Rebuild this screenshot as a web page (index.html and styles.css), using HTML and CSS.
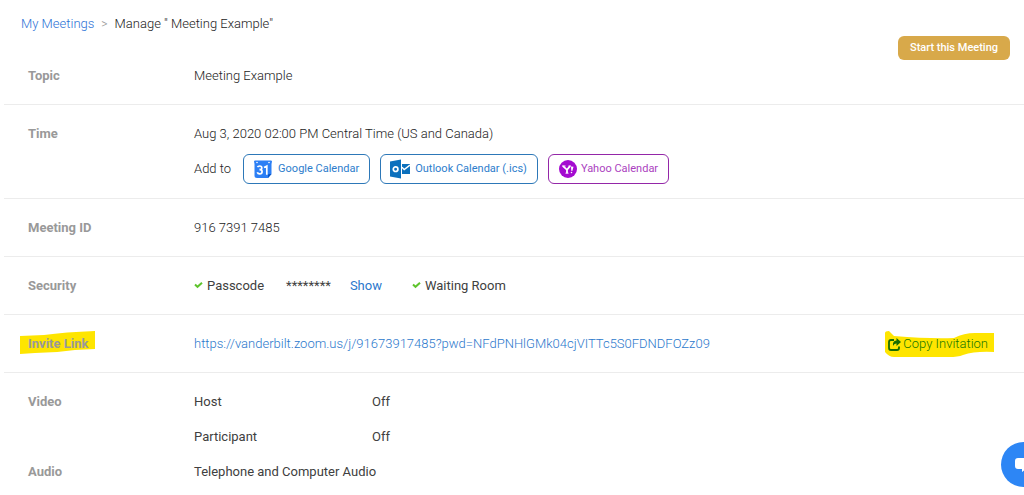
FILE: index.html
```html
<!DOCTYPE html>
<html lang="en">
<head>
<meta charset="utf-8">
<meta name="viewport" content="width=device-width, initial-scale=1">
<title>Manage Meeting</title>
<link rel="stylesheet" href="styles.css">
</head>
<body>
<main class="page">
  <header class="top">
    <nav class="crumbs" aria-label="Breadcrumb"><a href="#">My Meetings</a><span class="sep">&gt;</span><span>Manage " Meeting Example"</span></nav>
    <button class="start" type="button">Start this Meeting</button>
  </header>
  <dl class="details">
    <div class="row">
      <dt>Topic</dt>
      <dd class="light">Meeting Example</dd>
    </div>
    <div class="row time">
      <dt>Time</dt>
      <dd class="light">
        <div>Aug 3, 2020 02:00 PM Central Time (US and Canada)</div>
        <div class="calendars">
          <span class="add">Add to</span>
          <button class="cal" type="button">
            <svg width="20" height="20" viewBox="0 0 20 20" aria-hidden="true"><path fill="#2c7ff5" d="M1 2.500Q1 1 3 1.500h14q2-.5 2 1L18.500 5v10l-3.500 4H4q-2.500 0-2.500-2V5z"/><path fill="#0b56c4" d="M18.500 15L15 19v-3q0-1 1-1z"/><circle cx="4" cy="3.500" r=".8" fill="#fff"/><circle cx="16" cy="3.500" r=".8" fill="#fff"/><path fill="none" stroke="#fff" stroke-width="1.700" d="M4.500 8.200Q5 7 6.700 7q2.100 0 2.100 1.900T6.500 10.700q2.600 0 2.600 2T6.700 14.900Q4.800 14.900 4.300 13.200M11 8.500L13.800 7.200v8.500"/></svg>
            Google Calendar
          </button>
          <button class="cal" type="button">
            <svg width="20" height="20" viewBox="0 0 20 20" aria-hidden="true"><path fill="#0b70bd" d="M0 2.500L11 .5v19L0 17.500zM12 5h8v10h-8z"/><circle cx="5.600" cy="10.200" r="2.300" fill="none" stroke="#fff" stroke-width="1.700"/><path fill="none" stroke="#fff" stroke-width="1.400" d="M12 8.300l2.200 2.200L20 6"/></svg>
            Outlook Calendar (.ics)
          </button>
          <button class="cal yahoo" type="button">
            <svg width="20" height="20" viewBox="0 0 20 20" aria-hidden="true"><circle cx="10" cy="10" r="9" fill="#a40bd0"/><path fill="none" stroke="#fff" stroke-width="1.800" d="M5 7.200l4 3.600 3-3.600M9 10.600V14"/><path stroke="#fff" stroke-width="1" d="M4 7h3.500M10.500 7H13M7.500 14.200h3"/><path fill="#fff" d="M13 7.500l2.500.3-1.200 4.200-1-.2zM13 12.700l1.300.2-.3 1.400-1.300-.2z"/></svg>
            Yahoo Calendar
          </button>
        </div>
      </dd>
    </div>
    <div class="row">
      <dt>Meeting ID</dt>
      <dd class="light">916 7391 7485</dd>
    </div>
    <div class="row">
      <dt>Security</dt>
      <dd class="security">
        <span class="checked"><svg width="9" height="8" viewBox="0 0 9 8" aria-hidden="true"><path d="M1 2.500l2.500 2.300L8 .8"/></svg>Passcode</span>
        <span class="stars">********</span>
        <a class="show" href="#">Show</a>
        <span class="checked"><svg width="9" height="8" viewBox="0 0 9 8" aria-hidden="true"><path d="M1 2.500l2.500 2.300L8 .8"/></svg>Waiting Room</span>
      </dd>
    </div>
    <div class="row">
      <dt><span class="marked"><svg class="ink ink-label" viewBox="0 0 75 24" preserveAspectRatio="none" aria-hidden="true"><path d="M0 5l24-1Q45 1 75 0v18l-20 1Q35 22 15 22L0 23z"/></svg><span class="over">Invite Link</span></span></dt>
      <dd class="light invite">
        <a href="#">https://vanderbilt.zoom.us/j/91673917485?pwd=NFdPNHlGMk04cjVITTc5S0FDNDFOZz09</a>
        <button class="copy marked" type="button"><svg class="ink ink-copy" viewBox="0 0 109 26" preserveAspectRatio="none" aria-hidden="true"><path d="M0 2Q0 0 4 0l5 5q36 3 60 2Q79 2 90 2h19v19Q90 20 78 24q-5 2-14 2H9Q4 26 0 21z"/></svg><svg class="over share" width="13" height="13" viewBox="0 0 13 13" aria-hidden="true"><path fill="none" stroke="currentColor" stroke-width="1.800" d="M6 2H3Q1 2 1 4v6q0 2 2 2h6q2 0 2-2V8.500"/><path fill="currentColor" d="M8.500 0L13 4 8.500 8V5.500Q6 5.300 5 8 4.300 2.800 8.500 2.500z"/></svg><span class="over">Copy Invitation</span></button>
      </dd>
    </div>
    <div class="row group">
      <dt>Video</dt>
      <dd class="pair"><span>Host</span><span>Off</span><span>Participant</span><span>Off</span></dd>
      <dt>Audio</dt>
      <dd>Telephone and Computer Audio</dd>
    </div>
  </dl>
</main>
<button class="chat" type="button" aria-label="Chat"><svg width="18" height="20" viewBox="0 0 18 20" aria-hidden="true"><path fill="#fff" d="M3 3h12q3 0 3 3v6q0 2-2 2h-5l-4 3v-3H3q-3 0-3-3V6q0-3 3-3z"/></svg></button>
</body>
</html>
```
FILE: styles.css
```css
* { box-sizing: border-box; }
body {
  margin: 0;
  background: #fff;
  color: #404040;
  font: 400 13px/18px Roboto, Arial, sans-serif;
  overflow-x: hidden;
}
a { color: #2b78cc; text-decoration: none; }
button { font: inherit; cursor: pointer; }
.page { padding: 15px 0 0 4px; }
.top {
  display: flex;
  justify-content: space-between;
  align-items: flex-start;
  height: 32px;
  padding: 0 14px 0 17px;
}
.crumbs { display: flex; gap: 7px; color: #222; font-weight: 300; }
.crumbs a { color: #2b72d6; }
.sep { color: #999; font-size: 12px; }
.start {
  margin-top: 21px;
  height: 24px;
  padding: 0 12px;
  border: 0;
  border-radius: 6px;
  background: #d8a94a;
  color: #fff;
  font-size: 11px;
  font-weight: 500;
}
.details { margin: 0; }
.row {
  display: grid;
  grid-template-columns: 166px 1fr;
  padding: 20px 0 19px 24px;
  border-bottom: 1px solid #ececec;
}
.row.time { padding-bottom: 14px; }
dt { color: #999; font-weight: 700; }
dd { margin: 0; }
.light { color: #222; font-weight: 300; }
.calendars { display: flex; align-items: center; gap: 10px; margin-top: 11px; }
.add { margin-right: 2px; }
.cal {
  display: flex;
  align-items: center;
  gap: 5px;
  height: 30px;
  padding: 0 10px 0 9px;
  border: 1px solid #2d78b8;
  border-radius: 6px;
  background: #fff;
  color: #2d7dcc;
  font-size: 11px;
  font-weight: 400;
}
.cal.yahoo { gap: 3px; border-color: #9427a8; color: #ab3fc0; }
.security { display: flex; }
.checked { display: flex; align-items: center; gap: 4px; }
.checked path { fill: none; stroke: #5fc42d; stroke-width: 2; }
.stars { margin-left: 22px; }
.show { margin: 0 30px 0 19px; }
.invite { display: flex; justify-content: space-between; padding-right: 36px; }
.marked { position: relative; }
.over { position: relative; }
.ink { position: absolute; fill: #fee500; }
.ink-label { left: -8px; top: -5px; width: 75px; height: 24px; }
.ink-copy { left: -3px; top: -4px; width: 109px; height: 26px; }
.copy {
  display: flex;
  align-items: center;
  gap: 2px;
  padding: 0;
  border: 0;
  background: none;
  color: #207800;
  font-weight: 300;
}
.share { color: #176b00; }
.group { row-gap: 17px; border: 0; padding-bottom: 0; }
.pair { display: grid; grid-template-columns: 178px 1fr; row-gap: 17px; }
.chat {
  position: fixed;
  right: -22px;
  bottom: 8px;
  display: flex;
  align-items: center;
  justify-content: center;
  width: 45px;
  height: 45px;
  padding: 0;
  border: 0;
  border-radius: 50%;
  background: #2d86f5;
}
```
